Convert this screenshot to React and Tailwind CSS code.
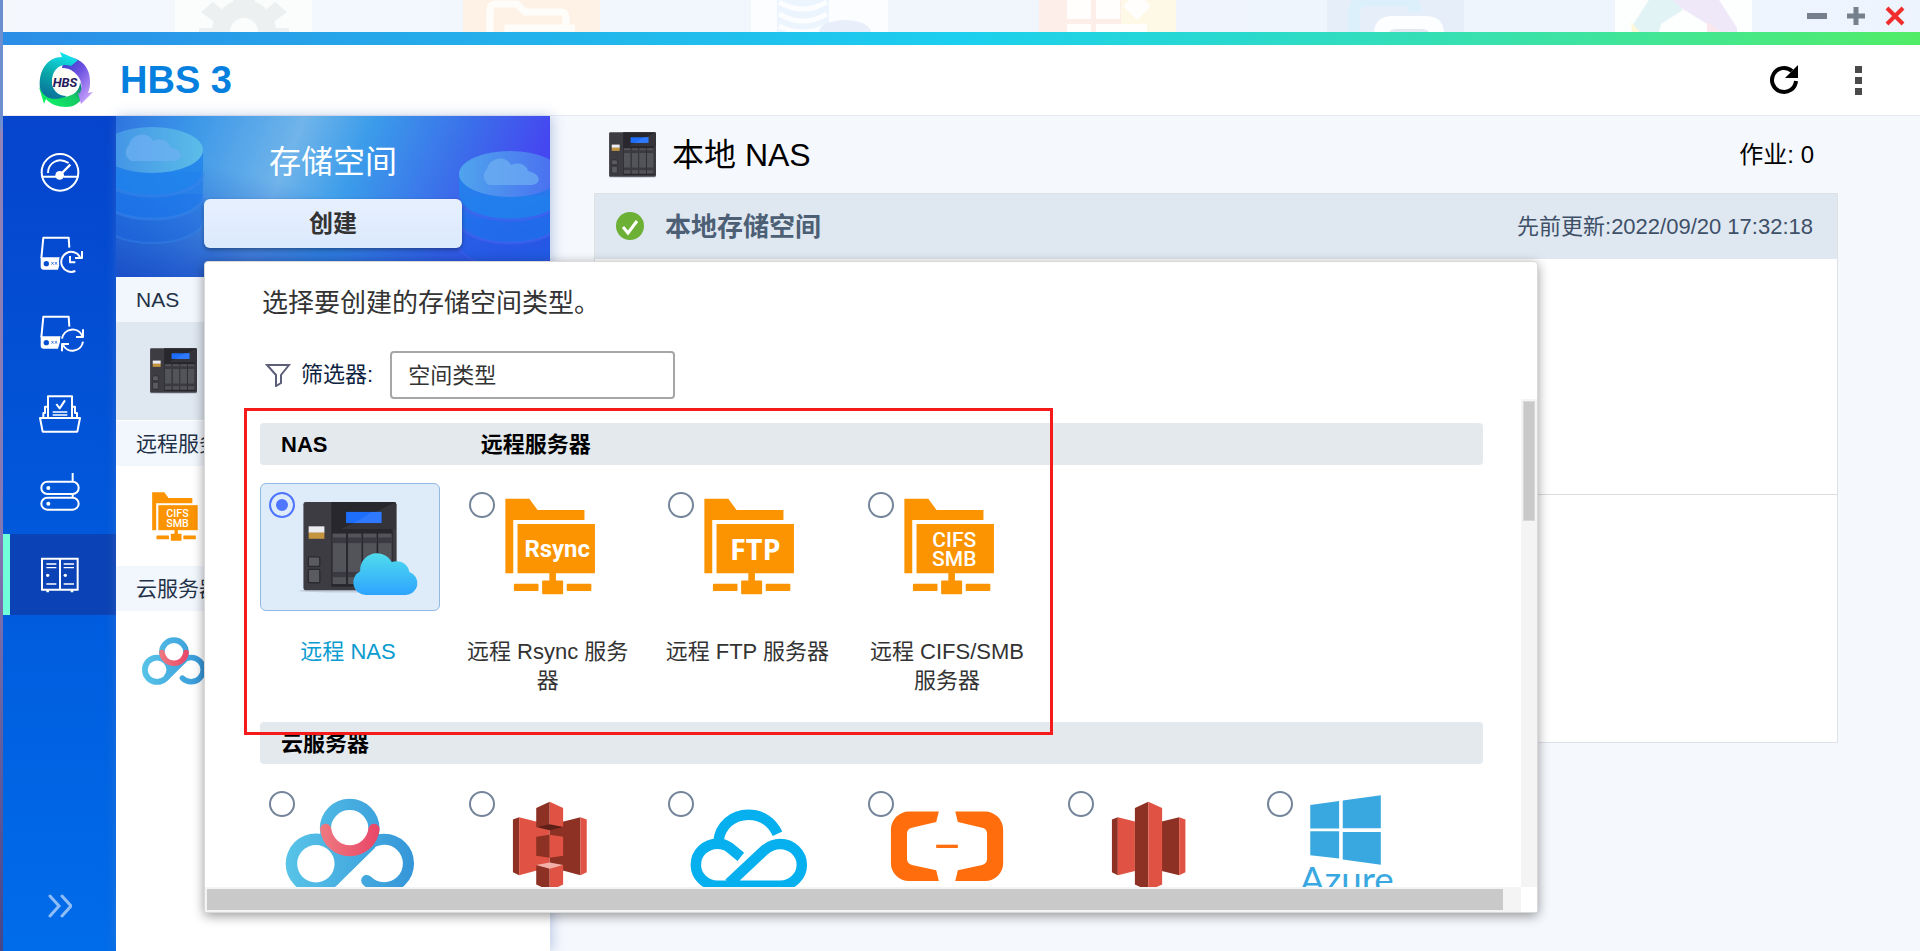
import { useState } from 'react'

const ORANGE = '#fb9400'

/* ---------- storage drawings ---------- */

function NasBody() {
  const bays = [280, 327, 373, 419]
  return (
    <g>
      <ellipse cx="330" cy="574" rx="152" ry="6" fill="#8a93a3" opacity="0.35" />
      <rect x="191" y="304" width="283" height="269" rx="7" fill="#3d3c42" />
      <path d="M276 304H467a7 7 0 0 1 7 7V562H276Z" fill="#28272d" />
      <path d="M468 306L305 386H474V311Z" fill="#35343a" />
      <rect x="321" y="334" width="108" height="34" fill="#1d6ffb" />
      <path d="M400 334H429V368H345Z" fill="#3a80ff" opacity="0.6" />
      <rect x="207" y="378" width="48" height="20" fill="#ecebf0" />
      <rect x="207" y="397" width="48" height="19" fill="#c5943f" />
      <rect x="206" y="471" width="35" height="29" rx="4" fill="#5a5b60" stroke="#2a292e" strokeWidth="4" />
      <rect x="206" y="509" width="35" height="41" rx="4" fill="#5a5b60" stroke="#2a292e" strokeWidth="4" />
      {bays.map((x) => (
        <g key={x}>
          <rect x={x} y="400" width="41" height="154" fill="#53545a" />
          <rect x={x} y="412" width="41" height="17" fill="#3a3a40" />
          <rect x={x} y="517" width="41" height="16" fill="#3a3a40" />
        </g>
      ))}
      <rect x="463" y="386" width="11" height="176" fill="#3d3c42" />
    </g>
  )
}

function NasIcon({ className }) {
  return (
    <svg className={className} viewBox="191 302 283 278" aria-hidden="true">
      <NasBody />
    </svg>
  )
}

function RemoteNasArt() {
  return (
    <svg className="w-full h-full" viewBox="63 249 540 384" aria-hidden="true">
      <defs>
        <linearGradient id="nasCloud" x1="0" y1="0" x2="0" y2="1">
          <stop offset="0" stopColor="#50dcec" />
          <stop offset="1" stopColor="#2da4ff" />
        </linearGradient>
      </defs>
      <NasBody />
      <path
        d="M380 587A38 38 0 0 1 364 515C362 484 386 460 415 460C435 460 452 471 460 487C486 478 510 492 514 517A36 36 0 0 1 500 587Z"
        fill="url(#nasCloud)"
      />
    </svg>
  )
}

function ShareFolder({ lines, className, viewBox = '662 249 540 384' }) {
  return (
    <svg className={className} viewBox={viewBox} aria-hidden="true">
      <g fill={ORANGE}>
        <path d="M796 294H869L894 328H1037V359H820V521H796Z" />
        <rect x="833" y="371" width="236" height="150" />
        <rect x="930" y="519" width="20" height="26" />
        <rect x="908" y="543" width="64" height="42" rx="3" />
        <rect x="822" y="553" width="75" height="22" rx="3" />
        <rect x="983" y="553" width="75" height="22" rx="3" />
      </g>
      {lines.map((line) => (
        <text
          key={line.text}
          x={line.x}
          y={line.y}
          fontSize={line.size}
          fontWeight={line.weight}
          textAnchor="middle"
          fill="#fff"
          fontFamily={line.family}
        >
          {line.text}
        </text>
      ))}
    </svg>
  )
}

const rsyncLines = [{ text: 'Rsync', x: 954, y: 470, size: 73, weight: 700, family: 'Roboto, sans-serif' }]
const ftpLines = [{ text: 'FTP', x: 951, y: 481, size: 88, weight: 700, family: '"Open Sans", sans-serif' }]
const smbLines = [
  { text: 'CIFS', x: 948, y: 441, size: 64, weight: 500, family: 'Roboto, sans-serif' },
  { text: 'SMB', x: 948, y: 500, size: 64, weight: 500, family: 'Roboto, sans-serif' },
]

function BaiduLogo({ className, viewBox, id }) {
  const blue = `url(#${id}-blue)`
  return (
    <svg className={className} viewBox={viewBox} aria-hidden="true">
      <defs>
        <linearGradient id={`${id}-blue`} gradientUnits="userSpaceOnUse" x1="138" y1="0" x2="528" y2="0">
          <stop offset="0" stopColor="#58c4e8" />
          <stop offset="1" stopColor="#3596d8" />
        </linearGradient>
        <linearGradient id={`${id}-red`} gradientUnits="userSpaceOnUse" x1="242" y1="0" x2="423" y2="0">
          <stop offset="0" stopColor="#ee7a80" />
          <stop offset="1" stopColor="#e94567" />
        </linearGradient>
      </defs>
      <circle cx="229" cy="462" r="92" fill={blue} />
      <path d="M294 527L408 415L420 380L332 400L250 370L229 480Z" fill={blue} />
      <circle cx="229" cy="462" r="57" fill="#fff" />
      <path d="M384 513A74 74 0 1 0 384 410" fill="none" stroke={blue} strokeWidth="34" strokeLinecap="round" />
      <circle cx="332" cy="355" r="74" fill="#fff" stroke={blue} strokeWidth="34" />
      <path d="M259 357A74 74 0 0 0 406 357" fill="none" stroke={`url(#${id}-red)`} strokeWidth="34" strokeLinecap="round" />
    </svg>
  )
}

function S3Logo() {
  return (
    <svg className="w-full h-full" viewBox="662 216 540 384" aria-hidden="true">
      <path d="M819 327L838 320V497L819 488Z" fill="#8c3123" />
      <path d="M838 320L931 344V472L838 497Z" fill="#e05243" />
      <path d="M1025 320L931 344V472L1025 497Z" fill="#8c3123" />
      <path d="M1044 327L1025 320V497L1044 488Z" fill="#e05243" />
      <path d="M890 292L931 273V343L890 350Z" fill="#8c3123" />
      <path d="M972 292L931 273V343L972 350Z" fill="#e05243" />
      <path d="M890 350L931 342L972 350L931 360Z" fill="#5e1f18" />
      <path d="M890 380L931 374V444L890 438Z" fill="#8c3123" />
      <path d="M972 380L931 374V444L972 438Z" fill="#e05243" />
      <path d="M890 466L931 475V545L890 525Z" fill="#8c3123" />
      <path d="M972 466L931 475V545L972 525Z" fill="#e05243" />
      <path d="M890 466L931 458L972 466L931 477Z" fill="#f2b0a9" />
    </svg>
  )
}

function TencentLogo() {
  return (
    <svg className="w-full h-full" viewBox="-59 216 540 384" fill="none" stroke="#06b0ee" strokeWidth="32" aria-hidden="true">
      <path d="M118 395C122 345 162 313 209 313C250 313 281 335 298 371" />
      <path d="M186 441L152 413C141 404 130 401 115 401A66 64 0 0 0 49 465A66 64 0 0 0 115 529H306A66 64 0 0 0 372 465A66 64 0 0 0 306 402C286 402 273 408 258 421L150 522" />
    </svg>
  )
}

function AlibabaLogo() {
  const bracket =
    'M779 303H688A55 55 0 0 0 633 358V460A55 55 0 0 0 688 515H779L771 482L697 466Q682 462 682 447V370Q682 355 697 352L771 335Z'
  return (
    <svg className="w-full h-full" viewBox="540 216 540 384" fill="#ff6d0c" aria-hidden="true">
      <path d={bracket} />
      <path d={bracket} transform="matrix(-1 0 0 1 1608 0)" />
      <rect x="771" y="404" width="66" height="10" />
    </svg>
  )
}

function GlacierLogo() {
  return (
    <svg className="w-full h-full" viewBox="-121 216 540 384" aria-hidden="true">
      <path d="M36 327L54 320V497L36 488Z" fill="#8c3123" />
      <path d="M54 320L106 333V484L54 497Z" fill="#e05243" />
      <path d="M241 320L188 333V484L241 497Z" fill="#8c3123" />
      <path d="M260 327L241 320V497L260 488Z" fill="#e05243" />
      <path d="M106 292L147 273V545L106 525Z" fill="#8c3123" />
      <path d="M189 292L147 273V545L189 525Z" fill="#e05243" />
    </svg>
  )
}

function AzureLogo() {
  return (
    <svg className="w-full h-full" viewBox="478 216 540 384" fill="#39a8e0" aria-hidden="true">
      <path d="M633 283L721 271V355H633Z" />
      <path d="M732 269L848 253V354H732Z" />
      <path d="M633 363H721V446L633 436Z" />
      <path d="M732 365H848V465L732 449Z" />
      <text x="744" y="552" fontSize="112" textAnchor="middle" fontFamily="Lato, sans-serif">
        Azure
      </text>
    </svg>
  )
}

/* ---------- header and sidebar drawings ---------- */

function HbsLogo() {
  return (
    <svg className="w-14 h-14" viewBox="0 0 56 56" aria-hidden="true">
      <defs>
        <linearGradient id="hbsTeal" x1="0.6" y1="0" x2="0.3" y2="1">
          <stop offset="0" stopColor="#12e6f0" />
          <stop offset="0.5" stopColor="#0aa9a9" />
          <stop offset="1" stopColor="#0a6f9c" />
        </linearGradient>
        <linearGradient id="hbsPurple" x1="0" y1="0" x2="0.8" y2="1">
          <stop offset="0" stopColor="#2f3fc8" />
          <stop offset="0.45" stopColor="#6a50e0" />
          <stop offset="1" stopColor="#cda6ff" />
        </linearGradient>
        <linearGradient id="hbsGreen" x1="0" y1="0.6" x2="1" y2="0">
          <stop offset="0" stopColor="#0cf065" />
          <stop offset="0.6" stopColor="#17c765" />
          <stop offset="1" stopColor="#0b5f8c" />
        </linearGradient>
      </defs>
      <path d="M46 44C41 52 35 55 28 55C20 55 12 52 8 47L6 52L1 35C8 44 16 45 26 45C36 44 42 38 42 30Z" fill="url(#hbsGreen)" />
      <path d="M26 5C43 4 53 16 52 31C52 36 51 38 50 41L55 40L43 52L40 41C43 44 47 30 38 22C34 18 30 16 24 16Z" fill="url(#hbsPurple)" />
      <path d="M2 36C0 18 10 5 24 5L22 0L40 8L33 14C22 10 14 18 14 29C14 38 20 44 29 44C18 49 6 48 2 36Z" fill="url(#hbsTeal)" />
      <circle cx="27" cy="30" r="13" fill="#fdfdf6" />
      <text x="27" y="35" fontSize="13" fontWeight="700" fontStyle="italic" textAnchor="middle" fill="#251a5e" fontFamily="Roboto, sans-serif">
        HBS
      </text>
    </svg>
  )
}

function NavSvg({ viewBox, children }) {
  return (
    <svg
      className="w-12 h-12"
      viewBox={viewBox}
      fill="none"
      stroke="#fff"
      strokeWidth="6"
      strokeLinejoin="round"
      strokeLinecap="butt"
      aria-hidden="true"
    >
      {children}
    </svg>
  )
}

function DriveShape() {
  return (
    <>
      <path d="M207 228L205 198H129L123 260" />
      <path d="M121 257H184L173 294H130Q121 294 121 285Z" fill="#fff" stroke="none" />
      <circle cx="138" cy="276" r="8" fill="#064fd3" stroke="none" />
      <path d="M153 271L160 279M160 271L153 279M164 271L170 279M170 271L164 279" stroke="#064fd3" strokeWidth="2" />
    </>
  )
}

const navIcons = {
  overview: (
    <NavSvg viewBox="0 -7 144 144">
      <circle cx="72" cy="72" r="55" />
      <path d="M17 85H62M82 85H127M36 74C36 46 64 24 98 44" />
      <path d="M72 80L103 49" strokeWidth="7" />
      <circle cx="71" cy="81" r="13" fill="#fff" stroke="none" />
    </NavSvg>
  ),
  backup: (
    <NavSvg viewBox="107 166 144 144">
      <DriveShape />
      <circle cx="213" cy="270" r="37" fill="#064bd1" stroke="none" />
      <path d="M225 298A30 30 0 1 1 239 256" />
      <path d="M245 238V259H224M209 253V272H225" />
    </NavSvg>
  ),
  sync: (
    <NavSvg viewBox="107 172 144 144">
      <DriveShape />
      <circle cx="217" cy="269" r="38" fill="#054fd4" stroke="none" />
      <path d="M185 264A32 32 0 0 1 246 256" />
      <path d="M248 236V259H227" />
      <path d="M248 273A32 32 0 0 1 188 283" />
      <path d="M185 302V280H206" />
    </NavSvg>
  ),
  restore: (
    <NavSvg viewBox="107 415 144 144">
      <path d="M119 502H239L231 543H127Z" />
      <path d="M143 500V437H215V500M129 500V487H134V468H143M215 468H224V487H230V500" />
      <path d="M168 460L178 473L194 449" />
      <path d="M157 484H201M157 493H201" strokeWidth="4" />
    </NavSvg>
  ),
  devices: (
    <NavSvg viewBox="107 658 144 144">
      <rect x="123" y="693" width="112" height="37" rx="18" />
      <rect x="123" y="741" width="112" height="36" rx="18" />
      <path d="M217 667V693M217 730V741" />
      <circle cx="144" cy="712" r="6" fill="#fff" stroke="none" />
      <circle cx="144" cy="759" r="6" fill="#fff" stroke="none" />
    </NavSvg>
  ),
  storage: (
    <NavSvg viewBox="107 901 144 144">
      <path d="M125 924H232V1017H125ZM179 924V1017" strokeLinejoin="miter" />
      <path d="M138 940H168M138 951H168M190 940H221M190 951H221M138 1000H168M190 1000H221" strokeWidth="4" />
      <path d="M142 1017V1025M215 1017V1025" strokeWidth="8" />
      <circle cx="142" cy="974" r="5" fill="#fff" stroke="none" />
      <circle cx="195" cy="974" r="5" fill="#fff" stroke="none" />
    </NavSvg>
  ),
}

const navItems = [
  { key: 'overview', label: '概述' },
  { key: 'backup', label: '备份与还原' },
  { key: 'sync', label: '同步' },
  { key: 'restore', label: '作业' },
  { key: 'devices', label: '服务' },
  { key: 'storage', label: '存储空间' },
]

/* faint desktop shortcuts behind the window title */
function DesktopStrip() {
  return (
    <div className="flex h-8 shrink-0 overflow-hidden bg-linear-to-r from-[#f4f8fd] to-[#edf4fd]">
      <div className="flex gap-[151px] pl-[172px]" aria-hidden="true">
        <svg className="w-[137px] h-8 bg-[#fbfcfc]" viewBox="0 0 137 32">
          <circle cx="69" cy="32" r="23" fill="none" stroke="#edf0f0" strokeWidth="18" />
          <path d="M58 -2H80V10H58ZM26 12L38 2L52 14L42 24ZM112 12L100 2L86 14L96 24ZM24 28H40V36H24ZM98 28H114V36H98Z" fill="#edf0f0" />
        </svg>
        <svg className="w-[137px] h-8 bg-[#fef2e6]" viewBox="0 0 137 32">
          <path d="M27 32V10Q27 4 33 4H54L62 12H98Q103 12 103 18V28M45 32V28H112" fill="none" stroke="#fffdfa" strokeWidth="7" />
        </svg>
        <svg className="w-[137px] h-8 bg-[#fcfdff]" viewBox="0 0 137 32">
          <path d="M26 0H78V32H26Z" fill="#ecf4fe" />
          <path d="M28 2Q52 16 76 2M28 14Q52 28 76 14M28 26Q52 38 76 26" fill="none" stroke="#fbfdff" strokeWidth="5" />
          <ellipse cx="94" cy="32" rx="26" ry="12" fill="#e9eefb" />
        </svg>
        <svg className="w-[137px] h-8 bg-[#fdf9e6]" viewBox="0 0 137 32">
          <path d="M0 0H82V32H0Z" fill="#fdeeea" />
          <path d="M28 0H52V19H28ZM57 0H81V19H57ZM28 24H52V32H28ZM57 24H108V32H57ZM98 -8L112 6L98 20L84 6Z" fill="#fffefc" />
        </svg>
        <svg className="w-[137px] h-8 bg-[#e6eef9]" viewBox="0 0 137 32">
          <path d="M27 32V14Q27 0 42 0H76Q88 0 88 12" fill="none" stroke="#dcf0fb" strokeWidth="12" />
          <path d="M47 32Q48 16 66 16H98Q116 16 117 32Z" fill="#fdfeff" />
          <path d="M62 32Q64 29 70 29H94Q100 29 102 32Z" fill="#e3e8f0" />
        </svg>
        <svg className="w-[137px] h-8 bg-[#fdfefe]" viewBox="0 0 137 32">
          <path d="M17 26L34 0H60L68 10L46 24L44 32H20Z" fill="#e2f3f6" />
          <path d="M58 0H104L122 28V32H92V24L68 9Z" fill="#efe8f9" />
          <path d="M16 22L25 32H17Z" fill="#fdf8d8" />
          <path d="M92 22L106 32H92Z" fill="#fbe6ee" />
        </svg>
      </div>
      <div className="ml-auto flex items-center gap-[19px] pr-[15px] pb-px">
        <button type="button" aria-label="最小化" className="w-5 h-6">
          <svg viewBox="0 0 20 24"><path d="M0 12H20" stroke="#75808c" strokeWidth="6" /></svg>
        </button>
        <button type="button" aria-label="最大化" className="w-5 h-6">
          <svg viewBox="0 0 20 24"><path d="M1 12H19M10 3V21" stroke="#75808c" strokeWidth="5" /></svg>
        </button>
        <button type="button" aria-label="关闭" className="w-5 h-6">
          <svg viewBox="0 0 20 24"><path d="M2 4L18 20M18 4L2 20" stroke="#f02c2c" strokeWidth="4" /></svg>
        </button>
      </div>
    </div>
  )
}

function AppHeader() {
  return (
    <header className="flex h-[71px] shrink-0 items-center border-b border-[#e6ebf2] bg-white pl-[35px] pr-[57px]">
      <HbsLogo />
      <h1 className="ml-[26px] text-[38px] leading-10 font-bold text-[#0680de]">HBS 3</h1>
      <div className="ml-auto flex items-center gap-14">
        <button type="button" aria-label="刷新" className="w-[30px] h-[30px]">
          <svg viewBox="0 0 30 30">
            <path d="M27 16A12 12 0 1 1 23 6" fill="none" stroke="#000" strokeWidth="4" />
            <path d="M29 0V13H16Z" fill="#000" />
          </svg>
        </button>
        <button type="button" aria-label="更多" className="flex w-2 flex-col gap-1">
          <span className="h-[7px] w-[7px] bg-[#4a4a4a]" />
          <span className="h-[7px] w-[7px] bg-[#4a4a4a]" />
          <span className="h-[7px] w-[7px] bg-[#4a4a4a]" />
        </button>
      </div>
    </header>
  )
}

function NavRail() {
  return (
    <nav className="flex w-[113px] shrink-0 flex-col bg-linear-to-b from-[#0644cc] to-[#006ce9] pt-[13px]">
      {navItems.map((item) => (
        <button
          key={item.key}
          type="button"
          aria-label={item.label}
          className={`flex h-[81px] w-full items-center justify-center border-l-[7px] pr-[7px] ${
            item.key === 'storage' ? 'border-l-[#71ffd9] bg-[#0b42b5]' : 'border-l-transparent'
          }`}
        >
          {navIcons[item.key]}
        </button>
      ))}
      <button type="button" aria-label="展开" className="mx-auto mt-auto mb-[33px] h-6 w-6">
        <svg viewBox="0 0 24 24" fill="none" stroke="#8fbdf8" strokeWidth="3" strokeLinecap="round">
          <path d="M2 2L11 12L2 22M14 2L23 12L14 22" />
        </svg>
      </button>
    </nav>
  )
}

function Drum({ id, x, y, from, to, rim }) {
  return (
    <g transform={`translate(${x} ${y})`}>
      <defs>
        <linearGradient id={id} x1="0" y1="0" x2="1" y2="0">
          <stop offset="0" stopColor={from} />
          <stop offset="1" stopColor={to} />
        </linearGradient>
      </defs>
      <path d="M-51 44V70A51 23 0 0 0 51 70V44Z" fill="#1668e6" opacity="0.35" />
      <path d="M-51 22V46A51 23 0 0 0 51 46V22Z" fill="#1b78ec" opacity="0.6" />
      <path d="M-51 46A51 23 0 0 0 51 46" fill="none" stroke={rim} strokeWidth="3" opacity="0.5" />
      <path d="M-51 0V22A51 23 0 0 0 51 22V0Z" fill="#2083ec" opacity="0.8" />
      <path d="M-51 23A51 23 0 0 0 51 23" fill="none" stroke={rim} strokeWidth="3" opacity="0.5" />
      <path d="M-51 70A51 23 0 0 0 51 70" fill="none" stroke={rim} strokeWidth="2" opacity="0.4" />
      <ellipse cx="0" cy="0" rx="51" ry="23" fill={`url(#${id})`} />
      <path d="M-21 11A10 10 0 0 1 -23 -5C-20 -17 -4 -19 1 -9C9 -13 17 -9 18 -3C32 0 32 11 20 11Z" fill="#6fb0f2" opacity="0.7" />
    </g>
  )
}

const nasTypes = [
  { id: 'nas', label: '远程 NAS', art: <RemoteNasArt /> },
  { id: 'rsync', label: '远程 Rsync 服务器', art: <ShareFolder className="w-full h-full" lines={rsyncLines} /> },
  { id: 'ftp', label: '远程 FTP 服务器', art: <ShareFolder className="w-full h-full" lines={ftpLines} /> },
  { id: 'smb', label: '远程 CIFS/SMB 服务器', art: <ShareFolder className="w-full h-full" lines={smbLines} /> },
]

const cloudTypes = [
  { id: 'baidu', name: '百度网盘', art: <BaiduLogo id="bd" className="w-full h-full" viewBox="63 216 540 384" /> },
  { id: 's3', name: 'Amazon S3', art: <S3Logo /> },
  { id: 'tencent', name: '腾讯云', art: <TencentLogo /> },
  { id: 'alibaba', name: '阿里云', art: <AlibabaLogo /> },
  { id: 'glacier', name: 'Amazon Glacier', art: <GlacierLogo /> },
  { id: 'azure', name: 'Azure', art: <AzureLogo /> },
]

function TypeTile({ type, selected, onSelect }) {
  return (
    <label className="block w-[180px]">
      <span
        className={`relative block h-32 rounded-md border ${
          selected ? 'border-[#93b9e4] bg-[#deebf9]' : 'border-transparent'
        }`}
      >
        {type.art}
        <input
          type="radio"
          name="storage-type"
          aria-label={type.name}
          checked={selected}
          onChange={() => onSelect(type.id)}
          className="absolute left-2 top-2 h-[26px] w-[26px] appearance-none rounded-full border-2 border-[#74859a] bg-white checked:border-[#4f76ff] checked:bg-[#4f76ff] checked:shadow-[inset_0_0_0_5px_#deebf9]"
        />
      </span>
      {type.label && (
        <span
          className={`mt-[26px] block w-44 text-center text-[22px] leading-[29px] ${
            selected ? 'text-[#0a9bd0]' : 'text-[#333]'
          }`}
        >
          {type.label}
        </span>
      )}
    </label>
  )
}

function CreateMenu() {
  const [selected, setSelected] = useState('nas')

  return (
    <div className="absolute left-0 top-full z-20 mt-[13px] flex h-[calc(100vh-299px)] w-[calc(100vw-586px)] flex-col rounded-sm border border-[#d9d9d9] bg-white shadow-[0_3px_12px_rgba(0,0,0,0.4)]">
      <p className="pl-[57px] pt-[23px] text-[26px] leading-9 text-[#333]">选择要创建的存储空间类型。</p>
      <div className="mt-[30px] flex items-center pl-[60px]">
        <svg className="w-[26px] h-6" viewBox="0 0 26 24" fill="none" stroke="#5d5e78" strokeWidth="2" aria-hidden="true">
          <path d="M2 2H24L16 12V20L11 23V12Z" />
        </svg>
        <label htmlFor="space-filter" className="ml-2.5 text-[22px] leading-8 text-[#0e2340]">
          筛选器:
        </label>
        <select
          id="space-filter"
          className="ml-[17px] h-12 w-[285px] appearance-none rounded-sm border-2 border-[#a6a6a6] bg-white px-4 text-[22px] text-[#333]"
        >
          <option>空间类型</option>
        </select>
      </div>

      <div className="flex min-h-0 flex-1">
        <div className="relative min-w-0 flex-1 overflow-hidden pl-[55px] pr-[38px] pt-6">
          <section className="h-[299px]">
            <div className="grid h-[42px] grid-cols-6 items-center rounded-sm bg-[#e4e9ed] pr-[25px] text-[22px] font-bold text-black">
              <h3 className="pl-[21px]">NAS</h3>
              <h3 className="pl-[21px]">远程服务器</h3>
            </div>
            <div className="mt-[18px] grid grid-cols-6 pr-[25px]">
              {nasTypes.map((type) => (
                <TypeTile key={type.id} type={type} selected={selected === type.id} onSelect={setSelected} />
              ))}
            </div>
          </section>
          <section>
            <h3 className="flex h-[42px] items-center rounded-sm bg-[#e4e9ed] pl-[21px] text-[22px] font-bold text-black">云服务器</h3>
            <div className="mt-[18px] grid grid-cols-6 pr-[25px]">
              {cloudTypes.map((type) => (
                <TypeTile key={type.id} type={type} selected={selected === type.id} onSelect={setSelected} />
              ))}
            </div>
          </section>
          {/* highlight around the remote server group */}
          <div className="pointer-events-none absolute left-[39px] top-[9px] h-[327px] w-[809px] border-3 border-[#f51b1b]" />
        </div>
        <div className="w-4 shrink-0 bg-[#f4f4f4] px-[2px] pt-[2px]">
          <div className="h-[120px] border border-[#d8d8d8] bg-[#c9c9c9]" />
        </div>
      </div>
      <div className="flex h-[25px] shrink-0">
        <div className="flex-1 bg-[#f4f4f4] py-[2px] pl-[2px] pr-[18px]">
          <div className="h-full bg-[#c9c9c9]" />
        </div>
        <div className="w-4 bg-white" />
      </div>
    </div>
  )
}

function StorageList() {
  return (
    <aside className="relative z-10 flex w-[434px] shrink-0 flex-col bg-white shadow-[2px_0_12px_rgba(110,140,200,0.45)]">
      <div className="relative flex h-[161px] flex-col items-center bg-[linear-gradient(112deg,#2f74e0_0%,#3b97e8_16%,#70b4ea_38%,#3b9cea_52%,#3b6eea_72%,#4548f0_88%)]">
        <div className="absolute inset-0 bg-[linear-gradient(15deg,#1a4fc9_0%,rgba(26,79,201,0)_50%)]" />
        <div className="absolute inset-0 bg-[linear-gradient(to_top_left,#1f56dd_0%,rgba(31,86,221,0)_30%)]" />
        <svg className="absolute inset-0 h-full w-full" viewBox="0 0 434 161" aria-hidden="true">
          <Drum id="drumLeft" x={36} y={34} from="#3f8fe6" to="#5cbde8" rim="#3a86ea" />
          <Drum id="drumRight" x={394} y={58} from="#4fa4ee" to="#4a6cf0" rim="#4a62f0" />
        </svg>
        <h2 className="relative mt-[26px] text-[32px] leading-10 text-white">存储空间</h2>
        <div className="relative mt-[17px]">
          <button
            type="button"
            className="block h-[49px] w-[258px] rounded-md bg-linear-to-b from-[#e7f0fe] to-[#dbe9fd] text-[24px] leading-8 font-bold text-[#333] shadow-[0_2px_4px_rgba(0,0,0,0.35)]"
          >
            创建
          </button>
          <CreateMenu />
        </div>
      </div>
      <h3 className="h-[45px] bg-[#f2f6fd] pl-5 text-[21px] leading-[45px] text-[#1f3147]">NAS</h3>
      <div className="flex h-[98px] items-center bg-[#dfe7f0] pl-[34px]">
        <NasIcon className="w-[47px] h-[46px]" />
      </div>
      <h3 className="h-[46px] border-t border-white bg-[#f2f6fd] pl-5 text-[21px] leading-[46px] text-[#1f3147]">远程服务器</h3>
      <div className="flex h-[100px] items-center pl-9">
        <ShareFolder className="w-[46px] h-[49px]" viewBox="796 292 274 294" lines={smbLines} />
      </div>
      <h3 className="h-[45px] bg-[#f2f6fd] pl-5 text-[21px] leading-[45px] text-[#1f3147]">云服务器</h3>
      <div className="flex h-[100px] items-center pl-[26px]">
        <BaiduLogo id="bds" className="w-[64px] h-12" viewBox="137 263 391 291" />
      </div>
    </aside>
  )
}

function LocalNas() {
  return (
    <main className="min-w-0 flex-1 bg-[#f5f8fd] pl-11 pr-[82px]">
      <div className="flex h-[77px] items-center pl-[15px] pr-6 text-black">
        <NasIcon className="w-[47px] h-[46px]" />
        <h2 className="ml-4 text-[32px] leading-10">本地 NAS</h2>
        <p className="ml-auto text-[24px] leading-8">作业: 0</p>
      </div>
      <section className="border border-[#dfe2e5] bg-white">
        <div className="flex h-[65px] items-center bg-[#dfe7f0] pl-[21px] pr-6">
          <svg className="w-[29px] h-[29px]" viewBox="0 0 29 29" aria-hidden="true">
            <circle cx="14" cy="14" r="14" fill="#6cb036" />
            <path d="M7 15L12 21L21 9" fill="none" stroke="#fff" strokeWidth="3" />
          </svg>
          <h3 className="ml-5 text-[26px] leading-8 font-bold text-[#4c5f75]">本地存储空间</h3>
          <p className="ml-auto text-[22px] leading-8 text-[#3e5068]">先前更新:2022/09/20 17:32:18</p>
        </div>
        <div className="h-[236px] border-b border-[#dcdcdc]" />
        <div className="h-[247px]" />
      </section>
    </main>
  )
}

export default function App() {
  return (
    <div className="flex h-screen overflow-hidden bg-white [font-family:'Liberation_Sans','Noto_Sans_CJK_SC',sans-serif]">
      <div className="w-[3px] shrink-0 bg-[linear-gradient(to_bottom,#6d8fd0_0%,#6d8fd0_13%,#9184b8_14%,#8478b4_55%,#46468a_100%)]" />
      <div className="flex min-w-0 flex-1 flex-col">
        <DesktopStrip />
        <div className="h-[13px] shrink-0 bg-linear-to-r from-[#2b8de6] via-[#1ccfee] to-[#51ec66]" />
        <AppHeader />
        <div className="flex min-h-0 flex-1">
          <NavRail />
          <StorageList />
          <LocalNas />
        </div>
      </div>
    </div>
  )
}
